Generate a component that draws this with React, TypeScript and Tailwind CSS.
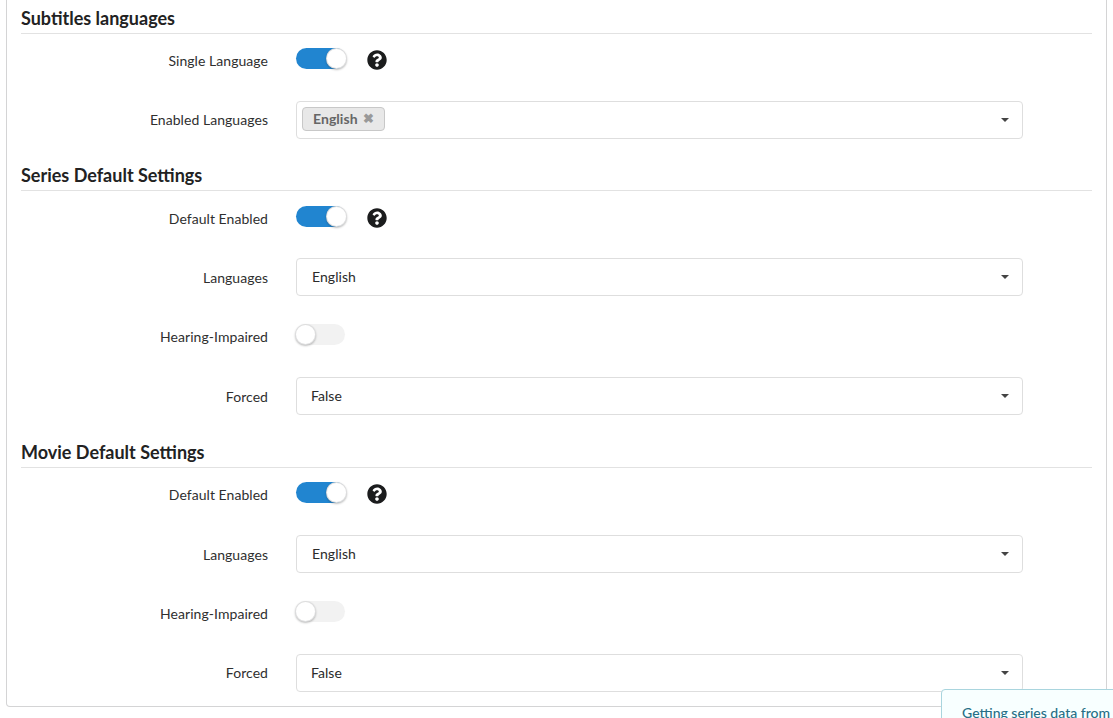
import { FaQuestionCircle } from "react-icons/fa";

function Toggle({ on }: { on: boolean }) {
  if (on) {
    return (
      <div className="relative mt-[-4px] h-[21px] w-[50px] rounded-full bg-[#2185d0]">
        <div className="absolute right-[-1px] top-0 h-[21px] w-[21px] rounded-full bg-white shadow-[0_1px_2px_rgba(34,36,38,0.3),0_0_0_1px_rgba(34,36,38,0.15)_inset]" />
      </div>
    );
  }
  return (
    <div className="relative mt-[-4px] h-[21px] w-[49px] rounded-full bg-[#f2f2f2]">
      <div className="absolute left-[-1px] top-0 h-[21px] w-[21px] rounded-full bg-white shadow-[0_1px_2px_rgba(34,36,38,0.3),0_0_0_1px_rgba(34,36,38,0.15)_inset]" />
    </div>
  );
}

function Select({ children }: { children?: React.ReactNode }) {
  return (
    <div className="flex h-[38px] w-[727px] items-center justify-between rounded-[4px] border border-[#dedede] bg-white pr-[13px] text-[14px] tracking-[0.05px] text-[#2b2b2b]">
      <div className="flex items-center pb-[1px]">{children}</div>
      <div className="h-0 w-0 border-x-[4px] border-t-[4px] border-x-transparent border-t-[#444]" />
    </div>
  );
}

function Row({ label, children }: { label: string; children: React.ReactNode }) {
  return (
    <div className="mb-[21.33px] flex h-[38px] items-center">
      <label className="w-[247px] text-right text-[14px] tracking-[0.05px] text-[#2f2f2f]">{label}</label>
      <div className="ml-[28px] flex items-center">{children}</div>
    </div>
  );
}

function Help() {
  return <FaQuestionCircle className="ml-[20.5px] mt-[-1px] text-[20px] text-[#1b1c1d]" />;
}

function Heading({ title }: { title: string }) {
  return (
    <h2 className="flex h-[31px] items-center border-b border-[#e2e2e2] text-[18px] font-bold text-[#222]">
      {title}
    </h2>
  );
}

function DefaultSettings({ title, className }: { title: string; className: string }) {
  return (
    <section className={className}>
      <Heading title={title} />
      <div className="pt-[7.67px]">
        <Row label="Default Enabled">
          <Toggle on />
          <Help />
        </Row>
        <Row label="Languages">
          <Select>
            <span className="pl-[15px]">English</span>
          </Select>
        </Row>
        <Row label="Hearing-Impaired">
          <Toggle on={false} />
        </Row>
        <Row label="Forced">
          <Select>
            <span className="pl-[14px]">False</span>
          </Select>
        </Row>
      </div>
    </section>
  );
}

export default function App() {
  return (
    <div className="relative h-[718px] w-[1113px] overflow-hidden bg-white font-['Lato',sans-serif]">
      <div className="ml-[6px] h-[707px] w-[1101px] overflow-hidden rounded-b-[4px] border border-t-0 border-[#d4d4d5] pl-[14px] pr-[14px] pt-[3px]">
        <section>
          <Heading title="Subtitles languages" />
          <div className="pt-[7.67px]">
            <Row label="Single Language">
              <Toggle on />
              <Help />
            </Row>
            <Row label="Enabled Languages">
              <Select>
                <div className="ml-[5px] flex h-[24px] w-[83px] items-center rounded-[4px] border border-[#c8c8c8] bg-[#e8e8e8] pb-[2px] pl-[10px] font-bold text-[#666]">
                  English
                  <span className="ml-[5px] text-[13px] text-[#999]">✖</span>
                </div>
              </Select>
            </Row>
          </div>
        </section>
        <DefaultSettings title="Series Default Settings" className="mt-[21.4px]" />
        <DefaultSettings title="Movie Default Settings" className="mt-[22px]" />
      </div>
      <div className="absolute left-[941px] top-[689px] h-[60px] w-[200px] rounded-[4px] border border-[#a9d5de] bg-[#f8ffff] pl-[20px] pt-[12px] text-[14px] font-medium whitespace-nowrap text-[#276f86]">
        Getting series data from :
      </div>
    </div>
  );
}
